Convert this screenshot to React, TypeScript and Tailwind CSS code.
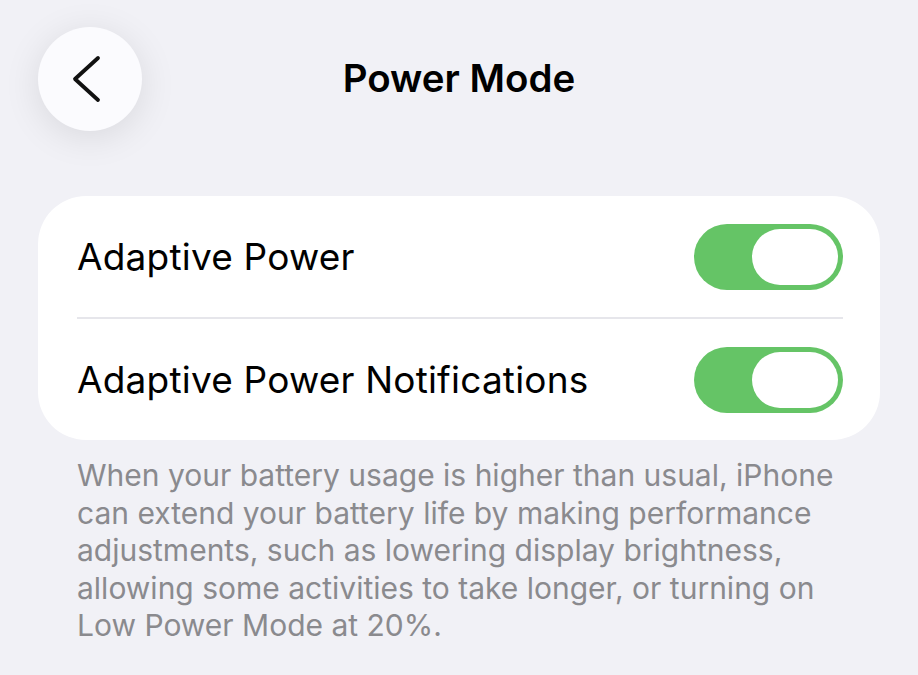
import React from "react";

function Toggle() {
  return (
    <div className="flex h-[66px] w-[149px] items-center justify-end rounded-full bg-[#65c466] px-[5px]">
      <div className="h-[56px] w-[86px] rounded-full bg-white" />
    </div>
  );
}

function Row({ label }: { label: string }) {
  return (
    <div className="flex h-[121px] items-center justify-between">
      <span className="text-[37px] tracking-[0.2px] text-black">{label}</span>
      <Toggle />
    </div>
  );
}

export default function App() {
  return (
    <div
      className="min-h-[675px] w-[918px] bg-[#f1f1f6] px-[38px] pt-[27px]"
      style={{ fontFamily: "Inter, 'Noto Sans', sans-serif" }}
    >
      <header className="grid grid-cols-[104px_1fr_104px] items-center">
        <button className="flex h-[104px] w-[104px] items-center justify-center rounded-full bg-[#fbfbfe] shadow-[0_6px_36px_rgba(0,0,0,0.10)]">
          <svg width="104" height="104" viewBox="0 0 104 104" fill="none">
            <path
              d="M60 31 L37 52 L60 73"
              stroke="#111"
              strokeWidth="3.8"
              strokeLinecap="round"
              strokeLinejoin="round"
            />
          </svg>
        </button>
        <h1 className="text-center text-[38.5px] font-semibold text-black">Power Mode</h1>
        <div />
      </header>

      <section className="mt-[65px] rounded-[48px] bg-white pl-[39px] pr-[37px]">
        <Row label="Adaptive Power" />
        <div className="h-[2px] bg-[#e6e6eb]" />
        <Row label="Adaptive Power Notifications" />
      </section>

      <p className="mt-[17px] px-[39px] text-[30px] leading-[37.5px] text-[#8a8a8e]">
        When your battery usage is higher than usual, iPhone can extend your battery life by making
        performance adjustments, such as lowering display brightness, allowing some activities to
        take longer, or turning on Low Power Mode at 20%.
      </p>
    </div>
  );
}
